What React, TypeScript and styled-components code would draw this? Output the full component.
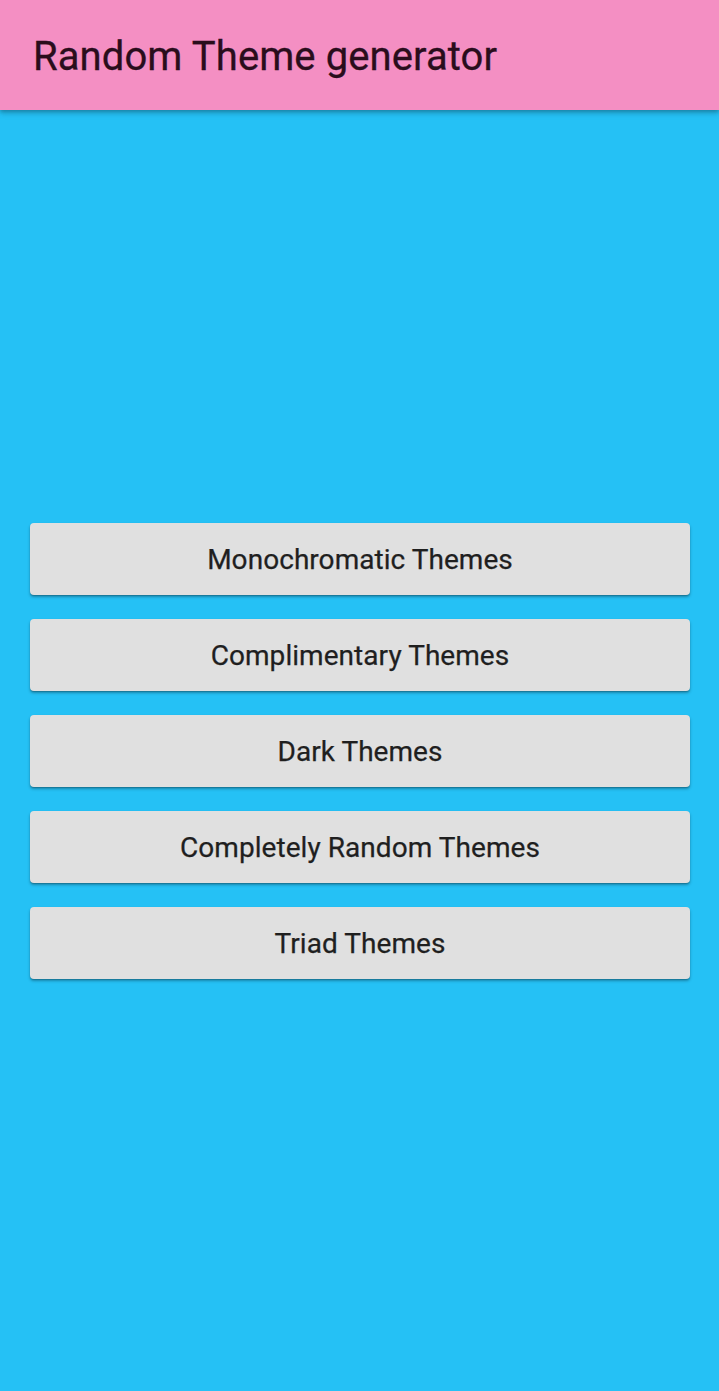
import styled, { createGlobalStyle } from "styled-components";

const GlobalStyle = createGlobalStyle`
  html, body {
    margin: 0;
    padding: 0;
  }
  body {
    font-family: Roboto, "Liberation Sans", sans-serif;
    background: #25c1f5;
  }
`;

const SPage = styled.div`
  display: flex;
  flex-direction: column;
  height: 1391px;
  background: #25c1f5;
`;

const SAppBar = styled.header`
  flex: 0 0 110px;
  box-sizing: border-box;
  display: flex;
  align-items: center;
  padding: 2px 33px 0;
  background: #f48fc3;
  box-shadow: 0 2px 4px rgba(0, 0, 0, 0.25), 0 4px 6px rgba(0, 0, 0, 0.1);
  position: relative;
  z-index: 1;
`;

const STitle = styled.h1`
  margin: 0;
  font-size: 40px;
  font-weight: 400;
  letter-spacing: 0.1px;
  color: #2a0d1c;
  -webkit-text-stroke: 0.3px #2a0d1c;
`;

const SBody = styled.main`
  flex: 1;
  display: flex;
  flex-direction: column;
  justify-content: center;
  gap: 24px;
  padding: 0 29px 0 30px;
`;

const SThemeButton = styled.button`
  height: 72px;
  padding: 2px 0 0;
  border: none;
  border-radius: 4px;
  background: #e0e0e0;
  color: #1f1f1f;
  font-family: Roboto, "Liberation Sans", sans-serif;
  font-size: 28px;
  font-weight: 400;
  letter-spacing: 0.05px;
  -webkit-text-stroke: 0.25px #1f1f1f;
  box-shadow: 0 2px 3px rgba(0, 0, 0, 0.3), 0 1px 1px rgba(0, 0, 0, 0.15);
  cursor: pointer;
`;

const themes = [
  "Monochromatic Themes",
  "Complimentary Themes",
  "Dark Themes",
  "Completely Random Themes",
  "Triad Themes",
];

export default function App() {
  return (
    <>
      <GlobalStyle />
      <SPage>
        <SAppBar>
          <STitle>Random Theme generator</STitle>
        </SAppBar>
        <SBody>
          {themes.map((t) => (
            <SThemeButton key={t}>{t}</SThemeButton>
          ))}
        </SBody>
      </SPage>
    </>
  );
}
